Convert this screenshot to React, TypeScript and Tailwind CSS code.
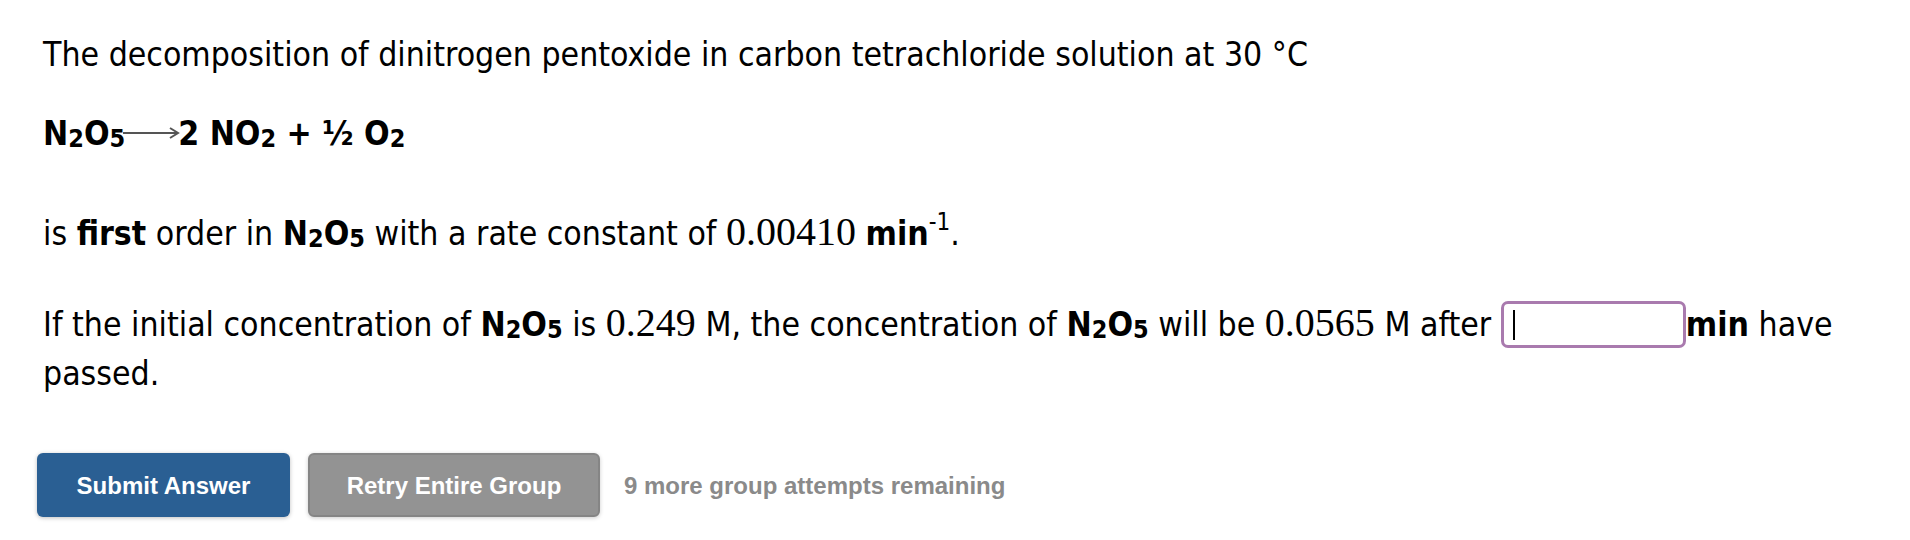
import React from 'react';

const Sub: React.FC<{ children: React.ReactNode }> = ({ children }) => (
  <sub className="text-[25px] relative top-[2px]">{children}</sub>
);

const N2O5: React.FC = () => (
  <b>
    N<Sub>2</Sub>O<Sub>5</Sub>
  </b>
);

const Num: React.FC<{ children: React.ReactNode }> = ({ children }) => (
  <span className="font-['Liberation_Serif',serif] text-[40px] font-stretch-normal">{children}</span>
);

export default function App() {
  return (
    <div className="min-h-[540px] w-[1910px] bg-white pl-[43px] pt-[31px] text-black font-['DejaVu_Sans_Condensed','DejaVu_Sans',Verdana,sans-serif] font-stretch-condensed text-[33.5px] leading-[47px]">
      <p>The decomposition of dinitrogen pentoxide in carbon tetrachloride solution at 30 °C</p>

      <p className="mt-[32px] font-bold">
        N<Sub>2</Sub>O<Sub>5</Sub>
        <span className="inline-block align-middle w-[57px] relative -top-[3px] mx-[-2px]">
          <svg width="57" height="16" viewBox="0 0 57 16">
            <line x1="0" y1="8" x2="54" y2="8" stroke="#555" strokeWidth="2" />
            <path d="M47 3 L55 8 L47 13" fill="none" stroke="#555" strokeWidth="2" />
          </svg>
        </span>
        2 NO<Sub>2</Sub> + ½ O<Sub>2</Sub>
      </p>

      <p className="mt-[51px]">
        is <b>first</b> order in <N2O5 /> with a rate constant of <Num>0.00410</Num>{' '}
        <b>min</b>
        <sup className="text-[24px] relative -top-[15px]">-1</sup>.
      </p>

      <p className="mt-[42px]">
        If the initial concentration of <N2O5 /> is <Num>0.249</Num> M, the concentration of <N2O5 /> will be{' '}
        <Num>0.0565</Num> M after{' '}
        <span className="inline-flex items-center align-middle w-[185px] h-[47px] border-[3px] border-[#a97aae] rounded-[7px] bg-white px-[9px] relative -top-[2px]">
          <span className="block w-[2px] h-[30px] bg-black" />
        </span>
        <b>min</b> have
        <br />
        passed.
      </p>

      <div className="mt-[56px] -ml-[6px] flex items-center gap-[18px] font-['Liberation_Sans',Arial,sans-serif] font-stretch-normal font-bold text-[24px]">
        <button className="w-[253px] h-[64px] rounded-[6px] bg-[#2a5f93] text-white shadow-[0_1px_4px_rgba(0,0,0,0.25)]">
          Submit Answer
        </button>
        <button className="w-[292px] h-[64px] rounded-[6px] bg-[#939393] border-2 border-[#858585] text-white shadow-[0_1px_4px_rgba(0,0,0,0.2)]">
          Retry Entire Group
        </button>
        <span className="ml-[6px] text-[#8a8a8a]">9 more group attempts remaining</span>
      </div>
    </div>
  );
}
